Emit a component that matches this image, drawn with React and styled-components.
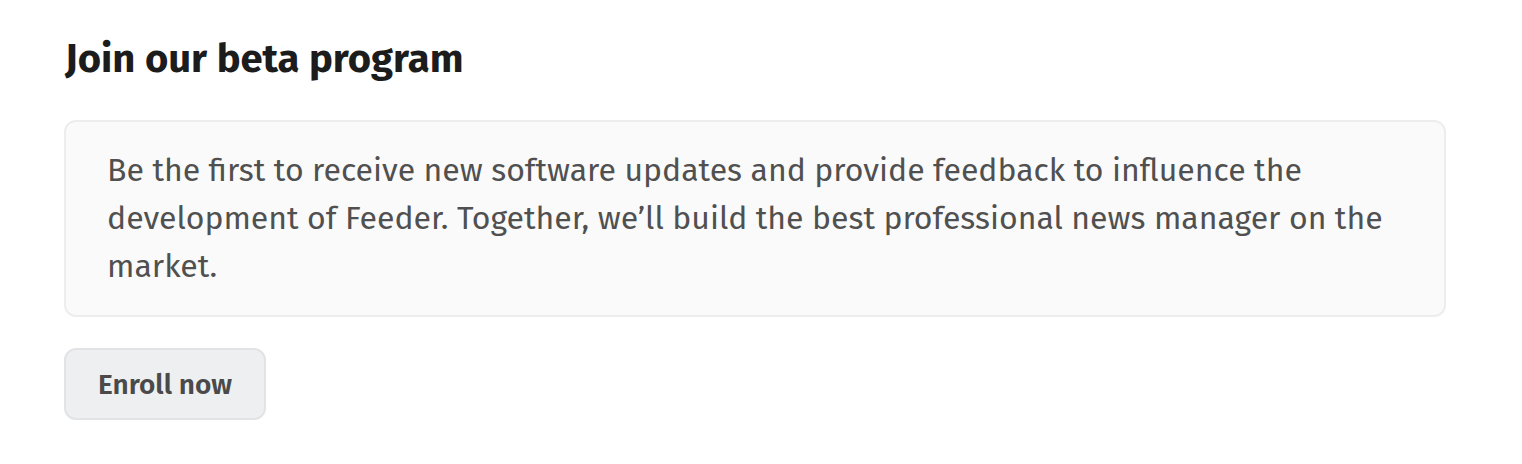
import React from "react";
import styled, { createGlobalStyle } from "styled-components";

const GlobalStyle = createGlobalStyle`
  body {
    margin: 0;
    background: #ffffff;
    font-family: "Fira Sans", "Noto Sans", sans-serif;
  }
`;

const Page = styled.section`
  padding: 33px 76px 0 64px;
  display: flex;
  flex-direction: column;
  align-items: flex-start;
`;

const Title = styled.h1`
  margin: 0 0 35px 1px;
  font-size: 40px;
  line-height: 52px;
  font-weight: 700;
  color: #1c1c1c;
`;

const Card = styled.div`
  align-self: stretch;
  box-sizing: border-box;
  padding: 24px 41px 25px 41px;
  background: #fafafa;
  border: 2px solid #ededed;
  border-radius: 12px;
`;

const Text = styled.p`
  margin: 0;
  font-size: 32px;
  line-height: 48px;
  color: #505050;
`;

const Button = styled.button`
  margin-top: 31px;
  height: 72px;
  padding: 0 32px;
  font-family: inherit;
  font-size: 28px;
  font-weight: 600;
  color: #4a4a4a;
  background: #eeeff1;
  border: 2px solid #e2e3e5;
  border-radius: 12px;
  cursor: pointer;
`;

const App = () => {
  return (
    <>
      <GlobalStyle />
      <Page>
        <Title>Join our beta program</Title>
        <Card>
          <Text>
            Be the first to receive new software updates and provide feedback to
            influence the development of Feeder. Together, we’ll build the best
            professional news manager on the market.
          </Text>
        </Card>
        <Button type="button">Enroll now</Button>
      </Page>
    </>
  );
};

export default App;
